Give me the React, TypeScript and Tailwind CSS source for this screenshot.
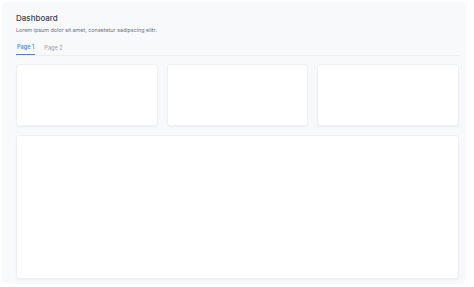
export default function App() {
  const cards = [0, 1, 2];

  return (
    <div className="h-[287px] w-[474px] bg-white p-[2px] font-['Inter',sans-serif]">
      <div className="flex h-[282px] w-[464px] flex-col rounded-md bg-[#f8f9fb] pl-[14px] pr-[7px] pt-[11px] pb-[5px]">
        {/* Header */}
        <h1 className="text-[8px] leading-[11px] font-medium text-[#374151]">Dashboard</h1>
        <p className="mt-[2px] text-[5.4px] leading-[8px] text-[#6b7280]">
          Lorem ipsum dolor sit amet, consetetur sadipscing elitr.
        </p>

        {/* Tabs */}
        <div className="mt-[9px] flex gap-[8px] border-b border-[#eceef2]">
          <button className="border-b border-[#3b82f6] px-[1px] pb-[3px] text-[5.6px] leading-[8px] font-medium text-[#3b82f6]">
            Page 1
          </button>
          <button className="px-[1px] pb-[3px] text-[5.6px] leading-[8px] text-[#9ca3af]">
            Page 2
          </button>
        </div>

        {/* Cards */}
        <div className="mt-[8px] grid grid-cols-3 gap-[9px]">
          {cards.map((c) => (
            <div
              key={c}
              className="h-[62px] rounded-[3px] border border-[#eef0f3] bg-white shadow-[0_1px_2px_rgba(0,0,0,0.04)]"
            />
          ))}
        </div>

        <div className="mt-[9px] flex-1 rounded-[3px] border border-[#eef0f3] bg-white shadow-[0_1px_2px_rgba(0,0,0,0.04)]" />
      </div>
    </div>
  );
}
